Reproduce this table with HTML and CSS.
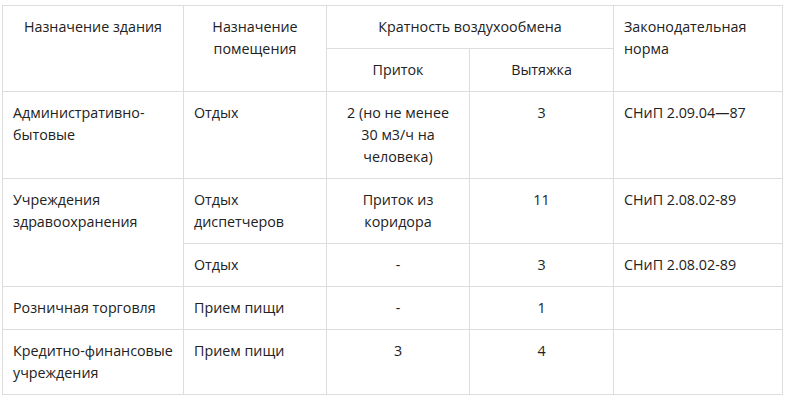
FILE: index.html
```html
<!DOCTYPE html>
<html lang="ru">
<head>
<meta charset="utf-8">
<title>Кратность воздухообмена</title>
<link rel="stylesheet" href="styles.css">
</head>
<body>
<table class="norms">
  <colgroup>
    <col class="c1">
    <col class="c2">
    <col class="c3">
    <col class="c4">
    <col class="c5">
  </colgroup>
  <thead>
    <tr>
      <th rowspan="2" class="center">Назначение здания</th>
      <th rowspan="2" class="center">Назначение помещения</th>
      <th colspan="2" class="center">Кратность воздухообмена</th>
      <th rowspan="2" class="left">Законодательная норма</th>
    </tr>
    <tr>
      <th class="center">Приток</th>
      <th class="center">Вытяжка</th>
    </tr>
  </thead>
  <tbody>
    <tr>
      <td>Административно-бытовые</td>
      <td>Отдых</td>
      <td class="center">2 (но не менее 30&nbsp;м3/ч на человека)</td>
      <td class="center">3</td>
      <td>СНиП 2.09.04—87</td>
    </tr>
    <tr>
      <td rowspan="2">Учреждения здравоохранения</td>
      <td>Отдых диспетчеров</td>
      <td class="center">Приток из коридора</td>
      <td class="center">11</td>
      <td>СНиП 2.08.02-89</td>
    </tr>
    <tr>
      <td>Отдых</td>
      <td class="center">-</td>
      <td class="center">3</td>
      <td>СНиП 2.08.02-89</td>
    </tr>
    <tr>
      <td>Розничная торговля</td>
      <td>Прием пищи</td>
      <td class="center">-</td>
      <td class="center">1</td>
      <td></td>
    </tr>
    <tr>
      <td>Кредитно-финансовые учреждения</td>
      <td>Прием пищи</td>
      <td class="center">3</td>
      <td class="center">4</td>
      <td></td>
    </tr>
  </tbody>
</table>
</body>
</html>
```

FILE: styles.css
```css
html, body {
  margin: 0;
  padding: 0;
  background: #ffffff;
}

body {
  padding: 5px 0 0 2px;
  font-family: "Open Sans", "Noto Sans", sans-serif;
  font-size: 14.3px;
  line-height: 22px;
  color: #222222;
}

.norms {
  border-collapse: collapse;
  table-layout: fixed;
  width: 780px;
}

.c1 { width: 181px; }
.c2 { width: 143px; }
.c3 { width: 143px; }
.c4 { width: 144px; }
.c5 { width: 169px; }

.norms th,
.norms td {
  border: 1px solid #dddddd;
  padding: 10px 10px;
  vertical-align: top;
  text-align: left;
  font-weight: normal;
}

.norms .center {
  text-align: center;
}

.norms .left {
  text-align: left;
}
```
